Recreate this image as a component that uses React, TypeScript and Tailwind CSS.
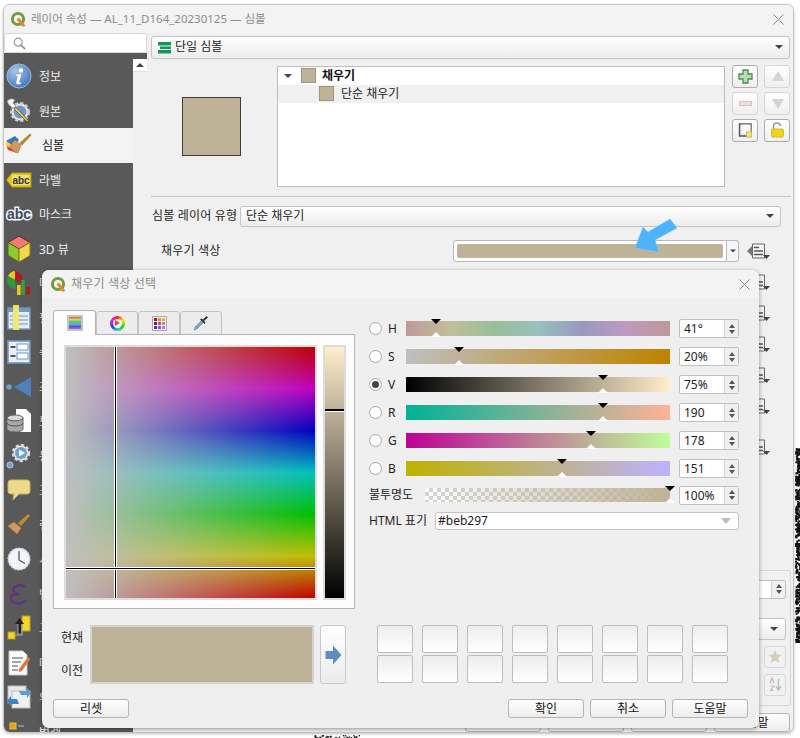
import React from "react";

const QLogo = () => (
  <svg width="17" height="17" viewBox="0 0 17 17">
    <circle cx="8" cy="8" r="5.6" fill="none" stroke="#6f9e3a" strokeWidth="3" />
    <path d="M6.5 8.5 L9 6.5 L15.5 15 L12.5 15.8 Z" fill="#e0882c" />
  </svg>
);

const Caret = ({ className = "" }: { className?: string }) => (
  <span className={`w-0 h-0 border-x-[4px] border-x-transparent border-t-[4px] border-t-[#444] ${className}`} />
);

// sidebar icons
const InfoIcon = () => (
  <svg width="26" height="26" viewBox="0 0 26 26">
    <defs>
      <radialGradient id="inf" cx="0.35" cy="0.3" r="0.8">
        <stop offset="0" stopColor="#a5c4ec" />
        <stop offset="1" stopColor="#3f73b8" />
      </radialGradient>
    </defs>
    <circle cx="13" cy="13" r="12" fill="url(#inf)" stroke="#9db8dc" />
    <circle cx="15" cy="7.5" r="2.2" fill="#fff" />
    <path d="M10.5 11.5 L15.5 11 L13.2 19 Q13.2 20 15 19 L14.6 21 Q9.8 22.4 10.3 19 L11.8 13.2 L10.2 13 Z" fill="#fff" />
  </svg>
);
const SourceIcon = () => (
  <svg width="26" height="26" viewBox="0 0 26 26">
    <circle cx="14" cy="14" r="8.5" fill="#f2f2f2" stroke="#d0d0d0" strokeWidth="3" strokeDasharray="3 2" />
    <circle cx="14" cy="14" r="6.5" fill="#6f97c4" />
    <path d="M1 3 Q5 -1 9 2 L7 5 L10 8 L8 10 Q3 9 1 3 Z" fill="#f2f2f2" stroke="#777" strokeWidth="0.6" />
    <path d="M10 9 L21 21 L24 24 L20 23 L8 11 Z" fill="#e3c75a" stroke="#444" strokeWidth="0.7" />
  </svg>
);
const SymbolIcon = () => (
  <svg width="28" height="26" viewBox="0 0 28 26">
    <path d="M1 9 L10 4 L14 8 L8 14 Z" fill="#3f72c4" />
    <path d="M1 9 L8 14 L6 16 L1.5 14 Z" fill="#efcf33" />
    <path d="M1.5 14 L6 16 L12 21 L3 18 Z" fill="#e8423f" />
    <path d="M10 8 L16 13 L13 21 Q9 21 5 14 Z" fill="#cf9a5c" stroke="#a87638" strokeWidth="0.6" />
    <path d="M14.5 11 L25 1.5 L26.5 3 L17 13.5 Z" fill="#b98432" />
  </svg>
);
const LabelIcon = () => (
  <svg width="26" height="16" viewBox="0 0 26 16">
    <path d="M0.6 8 L6 1 L25 1 L25 15 L6 15 Z" fill="#e8c912" stroke="#b59c10" />
    <rect x="6" y="3" width="17.5" height="10" fill="#efe07a" />
    <text x="15" y="11.6" textAnchor="middle" fontSize="10" fontWeight="700" fill="#333" fontFamily="Liberation Sans">abc</text>
  </svg>
);
const MaskIcon = () => (
  <svg width="28" height="18" viewBox="0 0 28 18">
    <text
      x="14"
      y="13.5"
      textAnchor="middle"
      fontSize="14"
      fontWeight="700"
      fill="#3d4a5c"
      stroke="#f2f5fa"
      strokeWidth="3"
      paintOrder="stroke"
      fontFamily="Liberation Sans"
    >
      abc
    </text>
  </svg>
);
const CubeIcon = () => (
  <svg width="24" height="28" viewBox="0 0 24 28">
    <path d="M12 1 L23 7.5 L12 14 L1 7.5 Z" fill="#f27a76" stroke="#5e2a28" />
    <path d="M1 7.5 L12 14 L12 27 L1 20.5 Z" fill="#8ccc2e" stroke="#4a6a20" />
    <path d="M23 7.5 L12 14 L12 27 L23 20.5 Z" fill="#f0d84a" stroke="#8a7c20" />
  </svg>
);
const DiagramIcon = () => (
  <svg width="24" height="24" viewBox="0 0 24 24">
    <path d="M8 9 L8 0 A9 9 0 0 0 1 5 Z" fill="#e8c822" />
    <path d="M8 9 L1 5 A9 9 0 0 0 9 18 Z" fill="#2f9a3c" />
    <path d="M8 9 L8 0 A9 9 0 0 1 15 13 Z" fill="#a82020" />
    <rect x="10" y="14" width="3.6" height="10" fill="#efc620" />
    <rect x="14.2" y="9" width="3.6" height="15" fill="#33a040" />
    <rect x="19" y="16" width="4" height="8" fill="#a82020" />
  </svg>
);
const FieldsIcon = () => (
  <svg width="24" height="26" viewBox="0 0 24 26">
    <rect x="1" y="3" width="22" height="21" fill="#e4ecf6" stroke="#6f97c4" strokeWidth="1.4" />
    <rect x="1" y="3" width="22" height="4" fill="#6f97c4" />
    <path d="M3 11 H21 M3 15 H21 M3 19 H21" stroke="#7c94ae" strokeWidth="1.2" />
    <rect x="6" y="0" width="6" height="25" fill="#f2ea6a" opacity="0.92" />
  </svg>
);
const FormIcon = () => (
  <svg width="24" height="24" viewBox="0 0 24 24">
    <rect x="1" y="1" width="22" height="22" fill="#e8eef6" stroke="#6f97c4" strokeWidth="1.6" />
    <rect x="3.5" y="6" width="5" height="2" fill="#555" />
    <rect x="3.5" y="15" width="5" height="2" fill="#555" />
    <rect x="10" y="4" width="11" height="6" fill="#fff" stroke="#6f97c4" />
    <rect x="10" y="13" width="11" height="6" fill="#fff" stroke="#6f97c4" />
  </svg>
);
const JoinIcon = () => (
  <svg width="26" height="22" viewBox="0 0 26 22">
    <circle cx="3" cy="11" r="2.8" fill="#6f9ed0" />
    <path d="M8 11 L25 1 L25 21 Z" fill="#4f82bc" />
  </svg>
);
const StorageIcon = () => (
  <svg width="26" height="26" viewBox="0 0 26 26">
    <path d="M10 1 H20 L25 6 V24 H10 Z" fill="#fff" />
    <ellipse cx="9" cy="10" rx="8" ry="3" fill="#d8d8d8" stroke="#666" />
    <path d="M1 10 V21 A8 3 0 0 0 17 21 V10 A8 3 0 0 1 1 10 Z" fill="#a8a8a8" stroke="#666" />
    <path d="M1 15 A8 3 0 0 0 17 15" fill="none" stroke="#555" />
  </svg>
);
const ActionIcon = () => (
  <svg width="26" height="26" viewBox="0 0 26 26">
    <circle cx="15" cy="10" r="7.5" fill="#f0f0f0" stroke="#d8d8d8" strokeWidth="3.4" strokeDasharray="3 2" />
    <circle cx="15" cy="10" r="6" fill="#6f9ed0" />
    <path d="M13 6.5 L19 10 L13 13.5 Z" fill="#fff" />
    <circle cx="4" cy="22" r="3" fill="#6f9ed0" stroke="#b8c6d8" />
  </svg>
);
const BubbleIcon = () => (
  <svg width="24" height="24" viewBox="0 0 24 24">
    <path d="M4 2 H20 Q23 2 23 5 V13 Q23 16 20 16 H12 L6 22 L7 16 H4 Q1 16 1 13 V5 Q1 2 4 2 Z" fill="#ecd98a" stroke="#c8b560" />
  </svg>
);
const BrushIcon = () => (
  <svg width="24" height="24" viewBox="0 0 24 24">
    <path d="M7 9 L14 15 L10 21 L1 13 Z" fill="#cf9a5c" stroke="#b08040" strokeWidth="0.6" />
    <path d="M11 10 L21 1 L23 3 L14 13 Z" fill="#c28a36" />
  </svg>
);
const ClockIcon = () => (
  <svg width="24" height="24" viewBox="0 0 24 24">
    <circle cx="12" cy="12" r="11" fill="#f2f4f8" stroke="#a9bfdc" strokeWidth="1.4" strokeDasharray="2 1.4" />
    <path d="M12 4 V13 L18 16.5" fill="none" stroke="#555" strokeWidth="1.3" />
  </svg>
);
const VarIcon = () => (
  <svg width="22" height="22" viewBox="0 0 22 22">
    <path d="M17 4 Q13 1 8 3 Q4 5 6 9 Q7 10.5 11 11 Q4 11 3 15 Q3 20 10 20.5 Q15 20.5 18 17" fill="none" stroke="#5e3480" strokeWidth="2.4" />
  </svg>
);
const UploadIcon = () => (
  <svg width="24" height="26" viewBox="0 0 24 26">
    <rect x="15" y="1" width="8" height="15" fill="#efd72c" stroke="#b9a31a" />
    <rect x="1" y="17" width="7" height="7" fill="#efd72c" stroke="#b9a31a" />
    <path d="M8 20 H15 V8 M11 20 V8" fill="none" stroke="#aaa" strokeWidth="1.2" />
    <path d="M12.5 3 L17 9 H14 V18 H11.5 V9 H8 Z" fill="#222" />
  </svg>
);
const NoteIcon = () => (
  <svg width="24" height="26" viewBox="0 0 24 26">
    <path d="M2 1 H16 L20 5 V25 H2 Z" fill="#fafafa" stroke="#c8c8c8" />
    <path d="M5 8 H16 M5 12 H14 M5 16 H11 M5 20 H11" stroke="#555" strokeWidth="1.1" />
    <path d="M12 19 L21 7 L23.5 9 L15 21 L12 22 Z" fill="#dd7a3c" />
  </svg>
);
const SwapIcon = () => (
  <svg width="24" height="24" viewBox="0 0 24 24">
    <rect x="1" y="1" width="18" height="17" fill="#e8e8e8" stroke="#bbb" />
    <rect x="5" y="6" width="18" height="17" fill="#f0f0f0" stroke="#bbb" />
    <path d="M12 6 H20 V3 L24 8 L20 13 V10 H14 Z" fill="#5d9ad8" />
    <path d="M12 19 H4 V22 L0 16 L4 11 V14 H10 Z" fill="#3f82cc" />
  </svg>
);
const LegendIcon = () => (
  <svg width="20" height="20" viewBox="0 0 20 20">
    <rect x="1" y="1" width="6" height="6" fill="#ef9a1a" stroke="#e8c822" />
    <path d="M9 4 H15" stroke="#bbb" strokeWidth="1.2" />
    <rect x="1" y="10" width="6" height="6" fill="#e03a20" />
  </svg>
);

const sideItems: { label: string; icon: React.ReactNode }[] = [
  { label: "정보", icon: <InfoIcon /> },
  { label: "원본", icon: <SourceIcon /> },
  { label: "심볼", icon: <SymbolIcon /> },
  { label: "라벨", icon: <LabelIcon /> },
  { label: "마스크", icon: <MaskIcon /> },
  { label: "3D 뷰", icon: <CubeIcon /> },
  { label: "다이어그램", icon: <DiagramIcon /> },
  { label: "필드", icon: <FieldsIcon /> },
  { label: "속성 양식", icon: <FormIcon /> },
  { label: "조인", icon: <JoinIcon /> },
  { label: "보조 저장소", icon: <StorageIcon /> },
  { label: "동작", icon: <ActionIcon /> },
  { label: "표시", icon: <BubbleIcon /> },
  { label: "렌더링", icon: <BrushIcon /> },
  { label: "시간", icon: <ClockIcon /> },
  { label: "변수", icon: <VarIcon /> },
  { label: "고도", icon: <UploadIcon /> },
  { label: "메타데이터", icon: <NoteIcon /> },
  { label: "의존성", icon: <SwapIcon /> },
  { label: "범례", icon: <LegendIcon /> },
];

const DefinedIcon = () => (
  <svg width="23" height="16" viewBox="0 0 23 16" className="block">
    <path d="M0 8 L5 3 L5 13 Z" fill="#777" />
    <path d="M5.5 1 H17.5 V15 H5.5 Z" fill="#f6f6f6" stroke="#666" strokeWidth="1" />
    <path d="M7 4.5 H12 M7 8 H16 M7 11.5 H16" stroke="#555" strokeWidth="1.3" />
    <path d="M16 12 H23 L19.5 16 Z" fill="#444" />
  </svg>
);

const ToolBtn = ({ children, dim }: { children?: React.ReactNode; dim?: boolean }) => (
  <div
    className={`w-[26px] h-[23px] flex items-center justify-center rounded-[3px] border bg-gradient-to-b from-white to-[#efefef] ${
      dim ? "border-[#d6d6d6]" : "border-[#adadad]"
    }`}
  >
    {children}
  </div>
);

const Combo = ({ children, className = "" }: { children: React.ReactNode; className?: string }) => (
  <div
    className={`flex items-center rounded-[3px] border border-[#c4c4c4] bg-gradient-to-b from-white to-[#ececec] ${className}`}
  >
    <div className="flex-1 flex items-center gap-[3px] pl-[5px] text-[12px]">{children}</div>
    <Caret className="mr-[6px]" />
  </div>
);

const PlainBtn = ({ label, className = "" }: { label?: string; className?: string }) => (
  <div
    className={`w-[76px] flex items-center justify-center rounded-[3px] border border-[#b4b4b4] bg-gradient-to-b from-white to-[#ececec] text-[12px] text-[#111] ${className}`}
  >
    {label}
  </div>
);

const Swatch = ({ className = "" }: { className?: string }) => (
  <div className={`w-[15px] h-[15px] bg-[#beb297] border border-[#9c9483] ${className}`} />
);

const sliders = [
  {
    k: "H",
    val: "41°",
    checked: false,
    track: "bg-[linear-gradient(to_right,#bf9999,#bfbf99_16.6%,#99bf99_33.3%,#99bfbf_50%,#9999bf_66.6%,#bf99bf_83.3%,#bf9999)]",
    mark: "left-[25px]",
  },
  { k: "S", val: "20%", checked: false, track: "bg-[linear-gradient(to_right,#bfbfbf,#bf8200)]", mark: "left-[48px]" },
  { k: "V", val: "75%", checked: true, track: "bg-[linear-gradient(to_right,#000000,#ffeecc)]", mark: "left-[192px]" },
  { k: "R", val: "190", checked: false, track: "bg-[linear-gradient(to_right,#00b297,#ffb297)]", mark: "left-[192px]" },
  { k: "G", val: "178", checked: false, track: "bg-[linear-gradient(to_right,#be0097,#beff97)]", mark: "left-[180px]" },
  { k: "B", val: "151", checked: false, track: "bg-[linear-gradient(to_right,#beb200,#beb2ff)]", mark: "left-[151px]" },
];

const Marker = ({ className }: { className: string }) => (
  <>
    <span className={`absolute -top-[2px] w-0 h-0 border-x-[5px] border-x-transparent border-t-[5px] border-t-black ${className}`} />
    <span className={`absolute -bottom-[1px] w-0 h-0 border-x-[5px] border-x-transparent border-b-[5px] border-b-white ${className}`} />
  </>
);

const Spin = ({ val }: { val: string }) => (
  <div className="w-[60px] h-[19px] flex rounded-[2px] border border-[#c0c0c0] bg-white">
    <span className="flex-1 pl-[4px] text-[12px] leading-[17px] text-[#222]">{val}</span>
    <div className="w-[14px] flex flex-col items-center justify-center gap-[2px] bg-[#f0f0f0] border-l border-[#d4d4d4]">
      <span className="w-0 h-0 border-x-[3.5px] border-x-transparent border-b-[4px] border-b-[#555]" />
      <span className="w-0 h-0 border-x-[3.5px] border-x-transparent border-t-[4px] border-t-[#555]" />
    </div>
  </div>
);

// scattered map points along the canvas behind the windows
const speckle = (count: number, w: number, h: number, seed: number) => {
  const out: { x: number; y: number }[] = [];
  let s = seed;
  for (let i = 0; i < count; i++) {
    s = (s * 9301 + 49297) % 233280;
    const x = (s / 233280) * w;
    s = (s * 9301 + 49297) % 233280;
    out.push({ x, y: (s / 233280) * h });
  }
  return out;
};

export default function App() {
  return (
    <div className="relative w-[800px] h-[738px] overflow-hidden bg-white text-[#222] [font-family:'Noto_Sans','Noto_Sans_CJK_KR',sans-serif]">
      {/* map behind the windows */}
      <svg className="absolute left-[795px] top-[448px]" width="5" height="195">
        {speckle(420, 5, 195, 7).map((p, i) => (
          <rect key={i} x={p.x} y={p.y} width="2" height="2" fill="#111" />
        ))}
      </svg>
      <svg className="absolute left-[310px] top-[735px]" width="50" height="3">
        {speckle(40, 50, 3, 13).map((p, i) => (
          <rect key={i} x={p.x} y={p.y} width="1.4" height="1.4" fill="#222" />
        ))}
      </svg>

      {/* layer properties window */}
      <div className="absolute left-[3px] top-[4px] w-[791px] h-[729px] flex flex-col overflow-hidden rounded-[7px] border border-[#c6c6c6] bg-[#f0f0f0] shadow-[0_1px_3px_rgba(0,0,0,0.25)]">
        <div className="h-[28px] shrink-0 flex items-center gap-[4px] pl-[6px] pr-[7px] bg-[#f3f3f3] text-[11.5px] text-[#8c8c8c]">
          <QLogo />
          <span className="flex-1">레이어 속성 — AL_11_D164_20230125 — 심볼</span>
          <svg width="11" height="11" viewBox="0 0 11 11" className="mr-[2px]">
            <path d="M0.5 0.5 L10.5 10.5 M10.5 0.5 L0.5 10.5" stroke="#8a8a8a" strokeWidth="1" />
          </svg>
        </div>

        <div className="flex-1 flex min-h-0">
          {/* sidebar */}
          <div className="w-[143px] shrink-0 flex flex-col min-h-0">
            <div className="h-[20px] shrink-0 flex items-center pl-[8px] bg-white border border-[#d8d8d8] rounded-[2px]">
              <svg width="13" height="13" viewBox="0 0 13 13">
                <circle cx="5.2" cy="5.2" r="4" fill="none" stroke="#999" strokeWidth="1.2" />
                <path d="M8.2 8.2 L12 12" stroke="#888" strokeWidth="1.6" />
              </svg>
            </div>
            <div className="h-[6px] shrink-0 bg-[#595959]" />
            <div className="flex-1 flex min-h-0">
              <div className="w-[129px] bg-[#595959] overflow-hidden">
                {sideItems.map((item) => (
                  <div
                    key={item.label}
                    className={`h-[34.5px] flex items-center text-[12px] ${
                      item.label === "심볼" ? "bg-[#f3f3f3] text-[#111]" : "text-[#ececec]"
                    }`}
                  >
                    <div className="w-[35px] shrink-0 flex items-center justify-center pr-[5px]">{item.icon}</div>
                    <span className={item.label === "심볼" ? "ml-[3px] pt-[2px]" : "pt-[2px]"}>{item.label}</span>
                  </div>
                ))}
              </div>
              <div className="w-[14px] bg-[#f0f0f0]">
                <div className="h-[13px] flex items-center justify-center bg-white border-b border-[#e0e0e0]">
                  <span className="w-0 h-0 border-x-[4px] border-x-transparent border-b-[4px] border-b-[#444]" />
                </div>
              </div>
            </div>
          </div>

          {/* symbol page */}
          <div className="flex-1 min-w-0 flex flex-col pl-[4px] pt-[3px] pr-[2px]">
            <Combo className="h-[23px] mr-[1px]">
              <svg width="15" height="13" viewBox="0 0 15 13">
                <path d="M1 1 H14 V4.5 H1 Z M3 5.5 H14 V8 H3 Z M1 9 H14 V12.5 H1 Z" fill="#0d9a58" />
              </svg>
              <span>단일 심볼</span>
            </Combo>

            <div className="flex mt-[7px]">
              <div className="w-[126px] flex items-center justify-center">
                <div className="w-[59px] h-[59px] ml-[-6px] bg-[#beb297] border border-[#3d3d3d]" />
              </div>
              <div className="w-[448px] h-[121px] bg-white border border-[#bdbdbd] text-[12px]">
                <div className="h-[18px] flex items-center pl-[6px]">
                  <Caret />
                  <Swatch className="ml-[9px]" />
                  <span className="ml-[6px] font-bold text-[#111]">채우기</span>
                </div>
                <div className="h-[18px] flex items-center pl-[41px] bg-[#f0f0f0]">
                  <Swatch />
                  <span className="ml-[7px] text-[#222]">단순 채우기</span>
                </div>
              </div>
              <div className="ml-[7px] grid grid-cols-[26px_26px] gap-x-[6px] gap-y-[4px] content-start -mt-[1px]">
                <ToolBtn>
                  <svg width="15" height="15" viewBox="0 0 15 15">
                    <path d="M5 1 H10 V5 H14 V10 H10 V14 H5 V10 H1 V5 H5 Z" fill="#b9dcb4" stroke="#4d8a55" strokeWidth="1.3" />
                  </svg>
                </ToolBtn>
                <ToolBtn dim>
                  <svg width="15" height="15" viewBox="0 0 15 15">
                    <path d="M8 2 L14 12 H2 Z" fill="#d4d4d4" />
                  </svg>
                </ToolBtn>
                <ToolBtn dim>
                  <div className="w-[13px] h-[5px] bg-[#efdcdc] border border-[#d8c4c4]" />
                </ToolBtn>
                <ToolBtn dim>
                  <svg width="15" height="15" viewBox="0 0 15 15">
                    <path d="M2 3 H14 L8 13 Z" fill="#d4d4d4" />
                  </svg>
                </ToolBtn>
                <ToolBtn>
                  <svg width="15" height="15" viewBox="0 0 15 15">
                    <path d="M1.5 1 H13 V13 H1.5 Z" fill="#e8e8e8" stroke="#555" strokeWidth="1.4" />
                    <rect x="3.5" y="1.5" width="9" height="9" fill="#f8f8f8" />
                    <rect x="8.5" y="9" width="5" height="5" fill="#f0e190" stroke="#d8bb3a" />
                  </svg>
                </ToolBtn>
                <ToolBtn>
                  <svg width="15" height="16" viewBox="0 0 15 16">
                    <path d="M3.5 7 V4 A3.5 3 0 0 1 10.5 4" fill="none" stroke="#999" strokeWidth="1.6" />
                    <rect x="1.5" y="7" width="12" height="8" rx="1.5" fill="#f0d414" stroke="#c8aa10" strokeWidth="0.7" />
                  </svg>
                </ToolBtn>
              </div>
            </div>

            <div className="h-px bg-[#c4c4c4] mt-[9px]" />

            <div className="flex items-center h-[21px] mt-[9px] text-[12px]">
              <span className="w-[89px] shrink-0 pl-[1px] whitespace-nowrap tracking-[0.2px]">심볼 레이어 유형</span>
              <Combo className="w-[541px] h-[21px]">
                <span>단순 채우기</span>
              </Combo>
            </div>

            <div className="flex items-center h-[22px] mt-[13px] text-[12px]">
              <span className="w-[302px] shrink-0 pl-[10px] tracking-[0.2px]">채우기 색상</span>
              <div className="w-[274px] h-[22px] p-[3px] rounded-l-[3px] border border-[#b8b8b8] bg-white">
                <div className="w-full h-full rounded-[2px] bg-[#beb297]" />
              </div>
              <div className="w-[12px] h-[22px] flex items-center justify-center rounded-r-[3px] border border-l-0 border-[#b8b8b8] bg-[#f6f6f6]">
                <Caret className="scale-75" />
              </div>
              <div className="ml-[8px]">
                <DefinedIcon />
              </div>
            </div>

            {/* rows under the colour dialog */}
            <div className="flex flex-col items-end pr-[21px]">
              <div className="mt-[12px]"><DefinedIcon /></div>
              <div className="mt-[15px]"><DefinedIcon /></div>
              <div className="mt-[15px]"><DefinedIcon /></div>
              <div className="mt-[15px]"><DefinedIcon /></div>
              <div className="mt-[15px]"><DefinedIcon /></div>
              <div className="mt-[25px]"><DefinedIcon /></div>
            </div>

            <div className="mt-[115px] h-[137px] ml-[1px] flex flex-col items-end pr-[4px] pt-[9px] border border-[#d8d8d8] rounded-[2px]">
              <div className="w-[100px] h-[19px] flex justify-end rounded-[2px] border border-[#c0c0c0] bg-white">
                <div className="w-[14px] flex flex-col items-center justify-center gap-[2px] bg-[#f0f0f0] border-l border-[#d4d4d4]">
                  <span className="w-0 h-0 border-x-[3.5px] border-x-transparent border-b-[4px] border-b-[#555]" />
                  <span className="w-0 h-0 border-x-[3.5px] border-x-transparent border-t-[4px] border-t-[#555]" />
                </div>
              </div>
              <div className="w-[100px] h-[22px] mt-[19px] flex items-center justify-end pr-[7px] rounded-[3px] border border-[#c4c4c4] bg-gradient-to-b from-white to-[#ececec]">
                <Caret />
              </div>
              <div className="w-[22px] h-[22px] mt-[6px] flex items-center justify-center rounded-[3px] border border-[#d6d6d6] bg-[#f2f2f2]">
                <svg width="15" height="15" viewBox="0 0 15 15">
                  <path d="M7 1 L9 5.5 L14 6 L10 9 L11.5 14 L7 11.5 L2.5 14 L4 9 L0.5 6 L5 5.5 Z" fill="#d6cfb8" />
                </svg>
              </div>
              <div className="w-[22px] h-[22px] mt-[6px] flex items-center justify-center rounded-[3px] border border-[#d6d6d6] bg-[#f2f2f2]">
                <svg width="15" height="15" viewBox="0 0 15 15">
                  <path d="M2 6 L4 1 L6 6 M2.5 9 H6 L2.5 13.5 H6" fill="none" stroke="#c8b8b8" strokeWidth="1.2" />
                  <path d="M10.5 2 V12 M8 9.5 L10.5 13 L13 9.5" fill="none" stroke="#b8c2cc" strokeWidth="1.6" />
                </svg>
              </div>
            </div>

            <div className="flex justify-end gap-[7px] mt-[7px] pr-[1px]">
              <PlainBtn className="h-[19px]" label="확인" />
              <PlainBtn className="h-[19px]" label="취소" />
              <PlainBtn className="h-[19px]" label="적용" />
              <PlainBtn className="h-[19px]" label="도움말" />
            </div>
          </div>
        </div>
      </div>

      {/* colour picker dialog */}
      <div className="absolute left-[42px] top-[270px] w-[717px] h-[458px] flex flex-col rounded-[7px] bg-[#efefef] shadow-[0_1px_4px_rgba(0,0,0,0.4)]">
        <div className="h-[28px] shrink-0 flex items-center gap-[4px] pl-[8px] pr-[9px] rounded-t-[7px] bg-[#f3f3f3] text-[12px] text-[#8c8c8c]">
          <QLogo />
          <span className="flex-1 tracking-[0.2px]">채우기 색상 선택</span>
          <svg width="11" height="11" viewBox="0 0 11 11">
            <path d="M0.5 0.5 L10.5 10.5 M10.5 0.5 L0.5 10.5" stroke="#8a8a8a" strokeWidth="1" />
          </svg>
        </div>

        <div className="flex-1 flex flex-col px-[11px] pt-[12px]">
          <div className="flex h-[299px]">
            {/* tabs and colour box */}
            <div className="w-[302px] flex flex-col">
              <div className="flex h-[24px]">
                <div className="relative z-10 w-[43px] h-[25px] flex items-center justify-center rounded-t-[3px] border border-b-0 border-[#b4b4b4] bg-[#fdfdfd]">
                  <div className="w-[16px] h-[16px] border-2 border-[#c4c4c4] bg-[linear-gradient(to_bottom,#e05050,#e0d050,#50c860,#50b8e0,#5050e0,#e050d0)]" />
                </div>
                <div className="w-[42px] h-[24px] mt-[1px] flex items-center justify-center rounded-t-[3px] border border-[#c4c4c4] bg-[#ececec]">
                  <div className="w-[15px] h-[15px] flex items-center justify-center rounded-full bg-[conic-gradient(#ff2020,#ffe020,#20d020,#20d0e0,#2040f0,#e020e0,#ff2020)]">
                    <div className="w-[9px] h-[9px] flex items-center justify-center rounded-full bg-white">
                      <span className="ml-[1px] w-0 h-0 border-y-[3px] border-y-transparent border-l-[5px] border-l-[#e8483c]" />
                    </div>
                  </div>
                </div>
                <div className="w-[42px] h-[24px] mt-[1px] flex items-center justify-center rounded-t-[3px] border border-[#c4c4c4] bg-[#ececec]">
                  <div className="w-[15px] h-[15px] grid grid-cols-3 gap-px p-px border border-[#aaa] bg-white">
                    <span className="bg-[#b01030]" />
                    <span className="bg-[#e89020]" />
                    <span className="bg-[#f0b030]" />
                    <span className="bg-[#901040]" />
                    <span className="bg-[#d84080]" />
                    <span className="bg-[#f070a0]" />
                    <span className="bg-[#6020e0]" />
                    <span className="bg-[#8050e0]" />
                    <span className="bg-[#a080f0]" />
                  </div>
                </div>
                <div className="w-[42px] h-[24px] mt-[1px] flex items-center justify-center rounded-t-[3px] border border-[#c4c4c4] bg-[#ececec]">
                  <svg width="16" height="16" viewBox="0 0 16 16">
                    <path d="M1 15 L2 12 L8 6 L10 8 L4 14 Z" fill="#7ea3cc" stroke="#5c7ea6" strokeWidth="0.5" />
                    <path d="M7 4.5 L11.5 9 L12.5 7.5 L11 6 L15 2.5 L13.5 1 L10 4.5 L8.5 3.5 Z" fill="#333" />
                  </svg>
                </div>
              </div>
              <div className="flex-1 flex gap-[6px] pl-[10px] pt-[10px] border border-[#b4b4b4] bg-[#fdfdfd]">
                <div className="relative w-[253px] h-[255px] border-2 border-[#dcdcdc] bg-[linear-gradient(to_right,#bfbfbf,transparent),linear-gradient(to_bottom,#bf0000,#bf00bf_16.66%,#0000bf_33.33%,#00bfbf_50%,#00bf00_66.66%,#bfbf00_83.33%,#bf0000)]">
                  <div className="absolute top-0 bottom-0 left-[48px] w-[3px] bg-black border-x border-white" />
                  <div className="absolute left-0 right-0 top-[220px] h-[3px] bg-black border-y border-white" />
                </div>
                <div className="relative w-[23px] h-[255px] border-2 border-[#dcdcdc] bg-[linear-gradient(to_bottom,#ffeecc,#000000)]">
                  <div className="absolute left-0 right-0 top-[62px] h-[3px] bg-black border-b border-white" />
                </div>
              </div>
            </div>

            {/* sliders */}
            <div className="ml-[14px] w-[370px] flex flex-col pt-[9px] text-[12px]">
              <div className="flex flex-col gap-[9px]">
                {sliders.map((s) => (
                  <div key={s.k} className="h-[19px] flex items-center">
                    <span className="w-[13px] h-[13px] flex items-center justify-center rounded-full border border-[#a8a8a8] bg-white">
                      {s.checked && <span className="w-[7px] h-[7px] rounded-full bg-[#444]" />}
                    </span>
                    <span className="w-[24px] pl-[6px] text-[#222]">{s.k}</span>
                    <div className={`relative w-[264px] h-[15px] ${s.track}`}>
                      <Marker className={s.mark} />
                    </div>
                    <div className="ml-[9px]">
                      <Spin val={s.val} />
                    </div>
                  </div>
                ))}
              </div>
              <div className="h-[18px] mt-[8px] flex items-center">
                <span className="w-[56px] whitespace-nowrap">불투명도</span>
                <div className="relative w-[245px] h-[14px] bg-[repeating-conic-gradient(#d4d4d4_0_25%,#ffffff_0_50%)] bg-[length:8px_8px]">
                  <div className="w-full h-full bg-[linear-gradient(to_right,rgba(190,178,151,0),#beb297)]" />
                  <Marker className="left-[240px]" />
                </div>
                <div className="ml-[9px]">
                  <Spin val="100%" />
                </div>
              </div>
              <div className="h-[18px] mt-[8px] flex items-center">
                <span className="w-[66px] whitespace-nowrap">HTML 표기</span>
                <div className="w-[304px] h-[18px] flex items-center rounded-[3px] border border-[#c4c4c4] bg-white pl-[2px] pr-[7px]">
                  <span className="flex-1 text-[#222]">#beb297</span>
                  <span className="w-0 h-0 border-x-[5px] border-x-transparent border-t-[6px] border-t-[#bdbdbd]" />
                </div>
              </div>
            </div>
          </div>

          <div className="flex h-[59px] mt-[16px]">
            <div className="w-[30px] ml-[7px] pr-[7px] flex flex-col justify-between items-end py-[4px] text-[12px] text-[#222]">
              <span>현재</span>
              <span>이전</span>
            </div>
            <div className="w-[224px] h-[59px] border-2 border-[#d4d4d4] bg-[#beb297]" />
            <div className="w-[26px] h-[59px] ml-[6px] flex items-center justify-center rounded-[3px] border border-[#c8c8c8] bg-gradient-to-b from-white to-[#ececec]">
              <svg width="17" height="20" viewBox="0 0 17 20">
                <path d="M0.5 6 H8 V0.5 L16.5 10 L8 19.5 V14 H0.5 Z" fill="#5f8fc0" />
              </svg>
            </div>
            <div className="ml-[31px] grid grid-cols-[repeat(8,36px)] grid-rows-[28px_28px] gap-x-[9px] gap-y-[2px]">
              {Array.from({ length: 16 }).map((_, i) => (
                <div key={i} className="rounded-[2px] border border-[#bdbdbd] bg-gradient-to-b from-[#ededed] to-white" />
              ))}
            </div>
          </div>

          <div className="flex h-[19px] mt-[15px]">
            <PlainBtn label="리셋" />
            <div className="flex-1" />
            <div className="flex gap-[6px]">
              <PlainBtn label="확인" />
              <PlainBtn label="취소" />
              <PlainBtn label="도움말" />
            </div>
          </div>
        </div>
      </div>

      {/* annotation arrow */}
      <svg className="absolute left-[625px] top-[216px]" width="55" height="40" viewBox="0 0 55 40">
        <path d="M45 3 L52 12 L30 24 L34 36 L10 32 L18 11 L23 16 Z" fill="#4db4fb" stroke="#7cc8fb" strokeWidth="0.6" />
      </svg>
    </div>
  );
}
